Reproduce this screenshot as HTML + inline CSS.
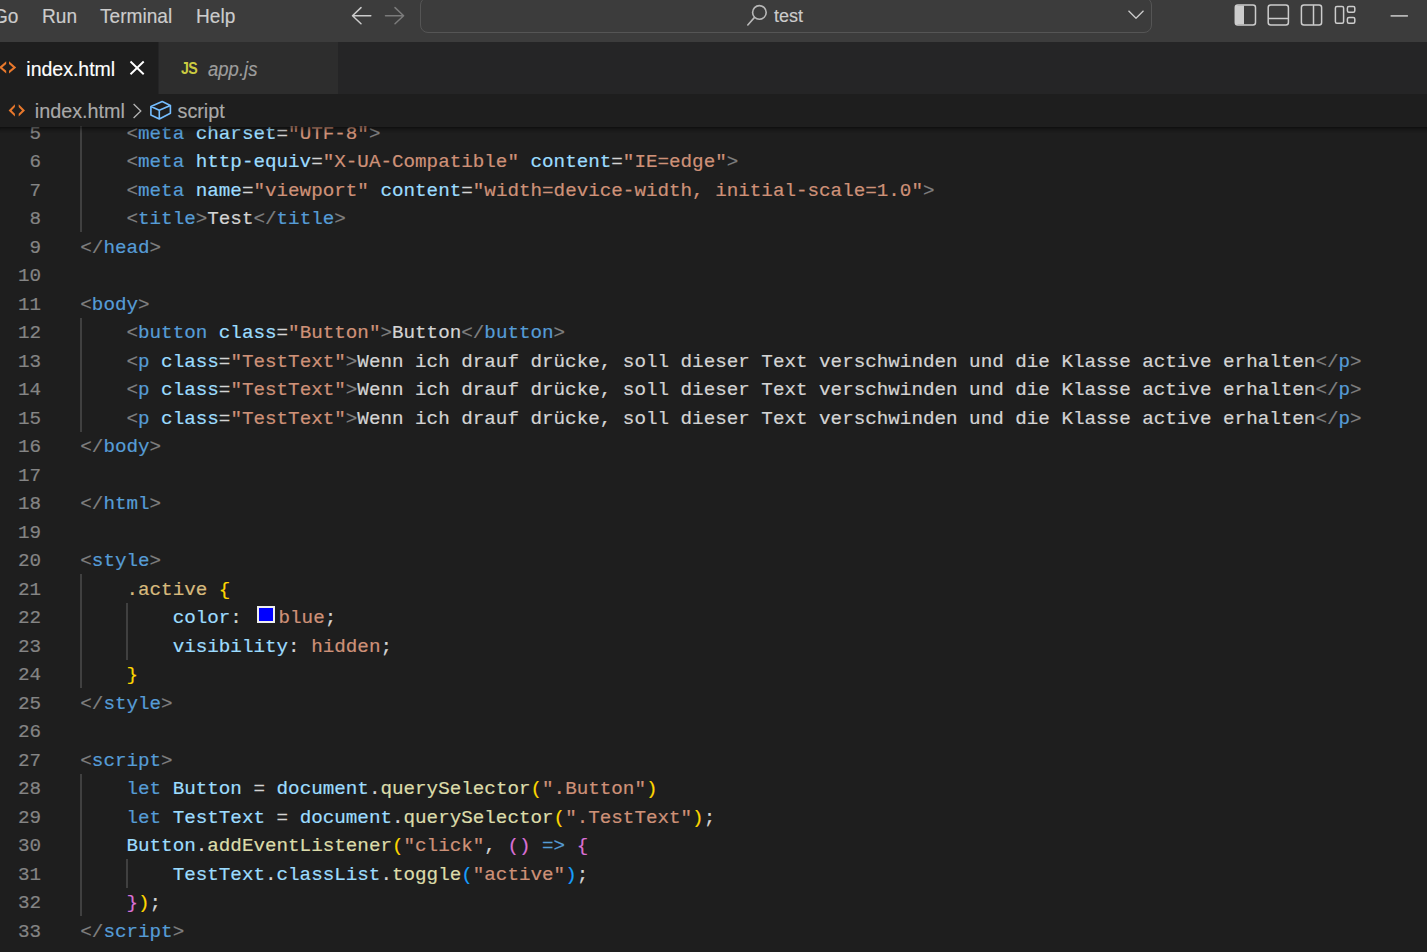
<!DOCTYPE html>
<html><head><meta charset="utf-8"><style>
*{margin:0;padding:0;box-sizing:border-box}
html,body{width:1427px;height:952px;overflow:hidden;background:#1e1e1e;position:relative}
body{font-family:"Liberation Sans",sans-serif}
#title{position:absolute;left:0;top:0;width:1427px;height:42px;background:#3c3c3c}
.menu{position:absolute;top:4.2px;font-size:19.8px;transform:scaleX(0.965);transform-origin:0 0;color:#cccccc;line-height:24px;white-space:nowrap}
#tabs{position:absolute;left:0;top:42px;width:1427px;height:52px;background:#252526}
.tab{position:absolute;top:0;height:52px}
#bc{position:absolute;left:0;top:94px;width:1427px;height:32.5px;background:#1e1e1e}
#editor{position:absolute;left:0;top:0;width:1427px;height:952px;overflow:hidden;clip-path:inset(126.5px 0 0 0)}
.ln,.num{position:absolute;height:28.5px;line-height:28.5px;white-space:pre;font-family:"Liberation Mono",monospace;font-size:19.24px;-webkit-text-stroke:0.2px}
.ln{left:80.3px}
.num{left:0;width:41px;text-align:right;color:#858585}
.guide{position:absolute;width:1.5px;background:#404040}
.p{color:#808080}.t{color:#569cd6}.a{color:#9cdcfe}.s{color:#ce9178}.w{color:#d4d4d4}.k{color:#569cd6}
.v{color:#9cdcfe}.f{color:#dcdcaa}.y{color:#ffd700}.m{color:#da70d6}.b{color:#179fff}.sel{color:#d7ba7d}
.sw{display:inline-block;width:17.2px;height:17.2px;margin:0 4px 0 3.9px;border:2px solid #eeeeee;background:#0000ff;vertical-align:0px}
.shadow{position:absolute;left:0;top:126.5px;width:1427px;height:6px;box-shadow:inset 0 6px 6px -6px #000}
.cc{position:absolute;top:0.5px;font-size:18px;line-height:30px;color:#cccccc;white-space:nowrap}
.tabt{position:absolute;top:12px;font-size:19.5px;line-height:30px;white-space:nowrap}
.js{position:absolute;top:17.5px;font-size:15.8px;line-height:17px;font-weight:bold;color:#cbcb41;letter-spacing:-0.8px;transform:scaleX(0.9);transform-origin:0 0}
.bct{position:absolute;top:1.8px;font-size:19.8px;line-height:30px;white-space:nowrap;color:#a9a9a9}
.menu,.tabt,.bct,.cc{-webkit-text-stroke:0.15px}

</style></head><body>
<div id="title">
  <div class="menu" style="left:-7.5px">Go</div>
  <div class="menu" style="left:41.8px">Run</div>
  <div class="menu" style="left:99.9px">Terminal</div>
  <div class="menu" style="left:195.8px">Help</div>
  <svg style="position:absolute;left:0;top:0" width="1427" height="42">
    <g fill="none" stroke-linecap="round" stroke-linejoin="round">
      <path d="M352.5 15.7 H370.8 M361 7.6 L352.5 15.7 L361 23.7" stroke="#cccccc" stroke-width="1.5"/>
      <path d="M385.5 15.7 H403.6 M395 7.6 L403.6 15.7 L395 23.7" stroke="#7b7b7b" stroke-width="1.5"/>
      <rect x="420.5" y="-2.5" width="731" height="35" rx="7.5" stroke="#555555" stroke-width="1"/>
      <circle cx="759.4" cy="12.4" r="6.8" stroke="#b8b8b8" stroke-width="1.6"/>
      <path d="M747.8 25 L754.3 17.6" stroke="#b8b8b8" stroke-width="1.6"/>
      <path d="M1128.5 10.8 L1136 18.3 L1143.5 10.8" stroke="#cccccc" stroke-width="1.25" stroke-linecap="butt"/>
      <!-- layout icons -->
      <rect x="1235.3" y="4.9" width="20.2" height="20.2" rx="2.5" stroke="#cccccc" stroke-width="1.5"/>
      <path d="M1236 5.6 H1244 V24.4 H1236 Z" fill="#cccccc" stroke="none"/>
      <rect x="1268.2" y="4.9" width="20.2" height="20.2" rx="2.5" stroke="#cccccc" stroke-width="1.5"/>
      <path d="M1269 18.4 H1287.6" stroke="#cccccc" stroke-width="1.5"/>
      <rect x="1301.4" y="4.9" width="20.2" height="20.2" rx="2.5" stroke="#cccccc" stroke-width="1.5"/>
      <path d="M1313.5 5.7 V24.3" stroke="#cccccc" stroke-width="1.5"/>
      <rect x="1335.4" y="6.4" width="8.2" height="16.9" rx="1.5" stroke="#cccccc" stroke-width="1.5"/>
      <rect x="1347.4" y="6.4" width="7.4" height="5.8" rx="1.5" stroke="#cccccc" stroke-width="1.5"/>
      <rect x="1347.4" y="17.5" width="7.4" height="5.8" rx="1.5" stroke="#cccccc" stroke-width="1.5"/>
      <path d="M1390.6 15.9 H1407.9" stroke="#cccccc" stroke-width="1.5" stroke-linecap="butt"/>
    </g>
  </svg>
  <div class="cc" style="left:774px">test</div>
</div>
<div id="tabs">
  <div class="tab" style="left:0;width:158px;background:#1e1e1e"></div>
  <div class="tab" style="left:158px;width:180px;background:#2d2d2d;border-left:1px solid #252526"></div>
  <svg style="position:absolute;left:0;top:0" width="340" height="52">
    <path d="M6.2 19.3 L-1 25.4 L6.2 31.6 V28.8 L2.2 25.4 L6.2 22.1 Z M9 19.3 L16.2 25.4 L9 31.6 V28.8 L13 25.4 L9 22.1 Z" fill="#e8782c"/>
    <path d="M130.5 19.5 L143.7 32.3 M143.7 19.5 L130.5 32.3" fill="none" stroke="#ffffff" stroke-width="1.9"/>
  </svg>
  <div class="tabt" style="left:26.3px;color:#ffffff">index.html</div>
  <div class="js" style="left:181px">JS</div>
  <div class="tabt" style="left:207.5px;color:#9d9d9d;font-style:italic;transform:scaleX(0.95);transform-origin:0 0">app.js</div>
</div>
<div id="bc">
  <svg style="position:absolute;left:0;top:0" width="200" height="33">
    <path d="M14.9 10.2 L8.6 16.4 L14.9 22.5 V19.7 L11.6 16.4 L14.9 13.0 Z M18.7 10.2 L25 16.4 L18.7 22.5 V19.7 L22 16.4 L18.7 13.0 Z" fill="#e8782c"/>
    <path d="M133.6 10 L140.8 17 L133.6 24" fill="none" stroke="#b4b4b4" stroke-width="1.3"/>
    <g fill="none" stroke="#75beff" stroke-width="1.6" stroke-linejoin="round">
      <path d="M162.2 7.6 L170.4 11.4 L159.3 16.2 L150.9 12.5 Z"/>
      <path d="M150.9 12.5 V21.1 L159.3 25 L170.4 19.2 V11.4 M159.3 16.2 V25"/>
    </g>
  </svg>
  <div class="bct" style="left:34.8px">index.html</div>
  <div class="bct" style="left:177.5px">script</div>
</div>

<div id="editor">
<div class="guide" style="left:80.10px;top:118.00px;height:114.00px"></div>
<div class="guide" style="left:80.10px;top:317.50px;height:114.00px"></div>
<div class="guide" style="left:80.10px;top:574.00px;height:114.00px"></div>
<div class="guide" style="left:126.28px;top:602.50px;height:57.00px"></div>
<div class="guide" style="left:80.10px;top:773.50px;height:142.50px"></div>
<div class="guide" style="left:126.28px;top:859.00px;height:28.50px"></div>
<div class="num" style="top:119.60px">5</div>
<div class="num" style="top:148.10px">6</div>
<div class="num" style="top:176.60px">7</div>
<div class="num" style="top:205.10px">8</div>
<div class="num" style="top:233.60px">9</div>
<div class="num" style="top:262.10px">10</div>
<div class="num" style="top:290.60px">11</div>
<div class="num" style="top:319.10px">12</div>
<div class="num" style="top:347.60px">13</div>
<div class="num" style="top:376.10px">14</div>
<div class="num" style="top:404.60px">15</div>
<div class="num" style="top:433.10px">16</div>
<div class="num" style="top:461.60px">17</div>
<div class="num" style="top:490.10px">18</div>
<div class="num" style="top:518.60px">19</div>
<div class="num" style="top:547.10px">20</div>
<div class="num" style="top:575.60px">21</div>
<div class="num" style="top:604.10px">22</div>
<div class="num" style="top:632.60px">23</div>
<div class="num" style="top:661.10px">24</div>
<div class="num" style="top:689.60px">25</div>
<div class="num" style="top:718.10px">26</div>
<div class="num" style="top:746.60px">27</div>
<div class="num" style="top:775.10px">28</div>
<div class="num" style="top:803.60px">29</div>
<div class="num" style="top:832.10px">30</div>
<div class="num" style="top:860.60px">31</div>
<div class="num" style="top:889.10px">32</div>
<div class="num" style="top:917.60px">33</div>
<div class="ln" style="top:119.60px"><span class="w">    </span><span class="p">&lt;</span><span class="t">meta</span><span class="w"> </span><span class="a">charset</span><span class="w">=</span><span class="s">&quot;UTF-8&quot;</span><span class="p">&gt;</span></div>
<div class="ln" style="top:148.10px"><span class="w">    </span><span class="p">&lt;</span><span class="t">meta</span><span class="w"> </span><span class="a">http-equiv</span><span class="w">=</span><span class="s">&quot;X-UA-Compatible&quot;</span><span class="w"> </span><span class="a">content</span><span class="w">=</span><span class="s">&quot;IE=edge&quot;</span><span class="p">&gt;</span></div>
<div class="ln" style="top:176.60px"><span class="w">    </span><span class="p">&lt;</span><span class="t">meta</span><span class="w"> </span><span class="a">name</span><span class="w">=</span><span class="s">&quot;viewport&quot;</span><span class="w"> </span><span class="a">content</span><span class="w">=</span><span class="s">&quot;width=device-width, initial-scale=1.0&quot;</span><span class="p">&gt;</span></div>
<div class="ln" style="top:205.10px"><span class="w">    </span><span class="p">&lt;</span><span class="t">title</span><span class="p">&gt;</span><span class="w">Test</span><span class="p">&lt;/</span><span class="t">title</span><span class="p">&gt;</span></div>
<div class="ln" style="top:233.60px"><span class="p">&lt;/</span><span class="t">head</span><span class="p">&gt;</span></div>
<div class="ln" style="top:262.10px"></div>
<div class="ln" style="top:290.60px"><span class="p">&lt;</span><span class="t">body</span><span class="p">&gt;</span></div>
<div class="ln" style="top:319.10px"><span class="w">    </span><span class="p">&lt;</span><span class="t">button</span><span class="w"> </span><span class="a">class</span><span class="w">=</span><span class="s">&quot;Button&quot;</span><span class="p">&gt;</span><span class="w">Button</span><span class="p">&lt;/</span><span class="t">button</span><span class="p">&gt;</span></div>
<div class="ln" style="top:347.60px"><span class="w">    </span><span class="p">&lt;</span><span class="t">p</span><span class="w"> </span><span class="a">class</span><span class="w">=</span><span class="s">&quot;TestText&quot;</span><span class="p">&gt;</span><span class="w">Wenn ich drauf drücke, soll dieser Text verschwinden und die Klasse active erhalten</span><span class="p">&lt;/</span><span class="t">p</span><span class="p">&gt;</span></div>
<div class="ln" style="top:376.10px"><span class="w">    </span><span class="p">&lt;</span><span class="t">p</span><span class="w"> </span><span class="a">class</span><span class="w">=</span><span class="s">&quot;TestText&quot;</span><span class="p">&gt;</span><span class="w">Wenn ich drauf drücke, soll dieser Text verschwinden und die Klasse active erhalten</span><span class="p">&lt;/</span><span class="t">p</span><span class="p">&gt;</span></div>
<div class="ln" style="top:404.60px"><span class="w">    </span><span class="p">&lt;</span><span class="t">p</span><span class="w"> </span><span class="a">class</span><span class="w">=</span><span class="s">&quot;TestText&quot;</span><span class="p">&gt;</span><span class="w">Wenn ich drauf drücke, soll dieser Text verschwinden und die Klasse active erhalten</span><span class="p">&lt;/</span><span class="t">p</span><span class="p">&gt;</span></div>
<div class="ln" style="top:433.10px"><span class="p">&lt;/</span><span class="t">body</span><span class="p">&gt;</span></div>
<div class="ln" style="top:461.60px"></div>
<div class="ln" style="top:490.10px"><span class="p">&lt;/</span><span class="t">html</span><span class="p">&gt;</span></div>
<div class="ln" style="top:518.60px"></div>
<div class="ln" style="top:547.10px"><span class="p">&lt;</span><span class="t">style</span><span class="p">&gt;</span></div>
<div class="ln" style="top:575.60px"><span class="w">    </span><span class="sel">.active</span><span class="w"> </span><span class="y">{</span></div>
<div class="ln" style="top:604.10px"><span class="w">        </span><span class="a">color</span><span class="w">: </span><span class="sw"></span><span class="s">blue</span><span class="w">;</span></div>
<div class="ln" style="top:632.60px"><span class="w">        </span><span class="a">visibility</span><span class="w">: </span><span class="s">hidden</span><span class="w">;</span></div>
<div class="ln" style="top:661.10px"><span class="w">    </span><span class="y">}</span></div>
<div class="ln" style="top:689.60px"><span class="p">&lt;/</span><span class="t">style</span><span class="p">&gt;</span></div>
<div class="ln" style="top:718.10px"></div>
<div class="ln" style="top:746.60px"><span class="p">&lt;</span><span class="t">script</span><span class="p">&gt;</span></div>
<div class="ln" style="top:775.10px"><span class="w">    </span><span class="k">let</span><span class="w"> </span><span class="v">Button</span><span class="w"> = </span><span class="v">document</span><span class="w">.</span><span class="f">querySelector</span><span class="y">(</span><span class="s">&quot;.Button&quot;</span><span class="y">)</span></div>
<div class="ln" style="top:803.60px"><span class="w">    </span><span class="k">let</span><span class="w"> </span><span class="v">TestText</span><span class="w"> = </span><span class="v">document</span><span class="w">.</span><span class="f">querySelector</span><span class="y">(</span><span class="s">&quot;.TestText&quot;</span><span class="y">)</span><span class="w">;</span></div>
<div class="ln" style="top:832.10px"><span class="w">    </span><span class="v">Button</span><span class="w">.</span><span class="f">addEventListener</span><span class="y">(</span><span class="s">&quot;click&quot;</span><span class="w">, </span><span class="m">()</span><span class="w"> </span><span class="k">=&gt;</span><span class="w"> </span><span class="m">{</span></div>
<div class="ln" style="top:860.60px"><span class="w">        </span><span class="v">TestText</span><span class="w">.</span><span class="v">classList</span><span class="w">.</span><span class="f">toggle</span><span class="b">(</span><span class="s">&quot;active&quot;</span><span class="b">)</span><span class="w">;</span></div>
<div class="ln" style="top:889.10px"><span class="w">    </span><span class="m">}</span><span class="y">)</span><span class="w">;</span></div>
<div class="ln" style="top:917.60px"><span class="p">&lt;/</span><span class="t">script</span><span class="p">&gt;</span></div>
<div class="shadow"></div>
</div>
</body></html>
